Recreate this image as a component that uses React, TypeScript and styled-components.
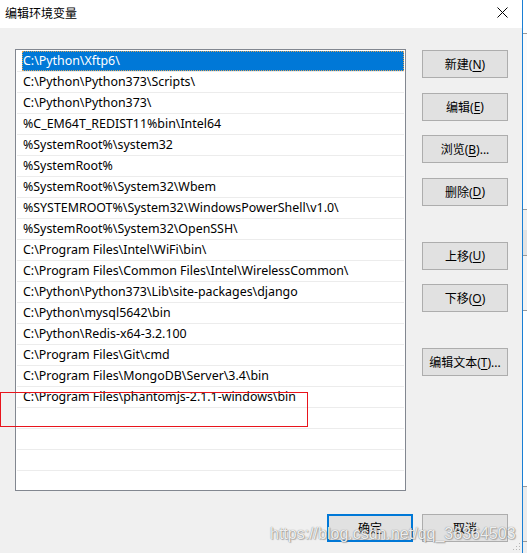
import React from 'react';
import styled, { createGlobalStyle } from 'styled-components';

const GlobalStyle = createGlobalStyle`
  html, body {
    margin: 0;
    padding: 0;
    background: #ffffff;
  }
  body {
    font-family: "Noto Sans", "Noto Sans CJK SC", sans-serif;
    font-size: 12px;
    color: #000;
  }
`;

const uiFont = `"Noto Sans", "Noto Sans CJK SC", sans-serif`;

const Screen = styled.div`
  position: relative;
  display: flex;
  width: 527px;
  height: 553px;
  overflow: hidden;
`;

const Dialog = styled.div`
  width: 522px;
  height: 553px;
  display: flex;
  flex-direction: column;
  background: #f0f0f0;
  border-right: 1px solid #1a7fd4;
`;

const TitleBar = styled.div`
  height: 28px;
  flex: none;
  display: flex;
  align-items: center;
  justify-content: space-between;
  background: #ffffff;
  padding: 0 14px 3px 5px;
  box-sizing: border-box;
`;

const Title = styled.span`
  font-family: ${uiFont};
  font-size: 12px;
  color: #000;
`;

const Body = styled.div`
  flex: 1;
  display: flex;
  flex-direction: column;
  padding: 21px 14px 11px 15px;
`;

const Main = styled.div`
  display: flex;
  gap: 16px;
`;

const PathList = styled.div`
  width: 392px;
  height: 442px;
  box-sizing: border-box;
  border: 1px solid #828790;
  background: #ffffff;
  padding: 1px 1px 0;
  overflow: hidden;
`;

const Row = styled.div`
  height: 21px;
  box-sizing: border-box;
  border-bottom: 1px solid #ececec;
  display: flex;
`;

const Cell = styled.div<{ $selected?: boolean }>`
  flex: 1;
  margin-left: 5px;
  padding-left: 1px;
  line-height: 20px;
  font-family: ${uiFont};
  font-size: 12.4px;
  white-space: nowrap;
  color: ${p => (p.$selected ? '#ffffff' : '#000000')};
  background: ${p => (p.$selected ? '#0078d7' : 'transparent')};
  outline: ${p => (p.$selected ? '1px dotted #d9a35a' : 'none')};
  outline-offset: -1px;
`;

const Side = styled.div`
  display: flex;
  flex-direction: column;
  padding-top: 1px;
`;

const ButtonGroup = styled.div<{ $spaced?: boolean }>`
  display: flex;
  flex-direction: column;
  gap: 14.6px;
  margin-top: ${p => (p.$spaced ? '36px' : '0')};
`;

const Button = styled.button<{ $primary?: boolean }>`
  width: 86px;
  height: 28px;
  box-sizing: border-box;
  padding: 0;
  background: #e1e1e1;
  border: ${p => (p.$primary ? '2px solid #0078d7' : '1px solid #adadad')};
  font-family: ${uiFont};
  font-size: 12px;
  color: #000;
  display: flex;
  align-items: center;
  justify-content: center;

  u {
    text-decoration-thickness: 1px;
    text-underline-offset: 2px;
  }
`;

const Footer = styled.div`
  margin-top: auto;
  display: flex;
  justify-content: flex-end;
  gap: 9px;
`;

const BackWindow = styled.div`
  flex: 1;
  display: flex;
  flex-direction: column;
  background: #ffffff;
`;

const BackBand = styled.div<{ $h: number; $bg: string; $line?: boolean }>`
  height: ${p => p.$h}px;
  flex: none;
  background: ${p => p.$bg};
  border-top: ${p => (p.$line ? '1px solid #9a9a9a' : 'none')};
`;

const Annotation = styled.div`
  position: absolute;
  left: 0;
  top: 392px;
  width: 308px;
  height: 35px;
  box-sizing: border-box;
  border: 1px solid #e8141c;
  pointer-events: none;
`;

const Watermark = styled.div`
  position: absolute;
  left: 270px;
  top: 525px;
  font-family: "Liberation Sans", Arial, sans-serif;
  font-size: 16px;
  line-height: 18px;
  color: rgba(255, 255, 255, 0.9);
  text-shadow: 0 0 1px rgba(70, 70, 70, 0.8), 1px 1px 1px rgba(110, 110, 110, 0.45);
  white-space: nowrap;
  pointer-events: none;
`;

const Grip = styled.svg`
  position: absolute;
  right: 6px;
  bottom: 2px;
`;

const paths = [
  'C:\\Python\\Xftp6\\',
  'C:\\Python\\Python373\\Scripts\\',
  'C:\\Python\\Python373\\',
  '%C_EM64T_REDIST11%bin\\Intel64',
  '%SystemRoot%\\system32',
  '%SystemRoot%',
  '%SystemRoot%\\System32\\Wbem',
  '%SYSTEMROOT%\\System32\\WindowsPowerShell\\v1.0\\',
  '%SystemRoot%\\System32\\OpenSSH\\',
  'C:\\Program Files\\Intel\\WiFi\\bin\\',
  'C:\\Program Files\\Common Files\\Intel\\WirelessCommon\\',
  'C:\\Python\\Python373\\Lib\\site-packages\\django',
  'C:\\Python\\mysql5642\\bin',
  'C:\\Python\\Redis-x64-3.2.100',
  'C:\\Program Files\\Git\\cmd',
  'C:\\Program Files\\MongoDB\\Server\\3.4\\bin',
  'C:\\Program Files\\phantomjs-2.1.1-windows\\bin',
];

// pad the list with blank rows down to the bottom of the box
const rows = [...paths, ...Array(5).fill('')];

const CloseIcon = () => (
  <svg width="11" height="11" viewBox="0 0 11 11">
    <path d="M0.5 0.5 L10.5 10.5 M10.5 0.5 L0.5 10.5" stroke="#000" strokeWidth="1" />
  </svg>
);

const App: React.FC = () => {
  return (
    <Screen>
      <GlobalStyle />
      <Dialog>
        <TitleBar>
          <Title>编辑环境变量</Title>
          <CloseIcon />
        </TitleBar>
        <Body>
          <Main>
            <PathList>
              {rows.map((p, i) => (
                <Row key={i}>
                  <Cell $selected={i === 0}>{p}</Cell>
                </Row>
              ))}
            </PathList>
            <Side>
              <ButtonGroup>
                <Button>新建(<u>N</u>)</Button>
                <Button>编辑(<u>E</u>)</Button>
                <Button>浏览(<u>B</u>)...</Button>
                <Button>删除(<u>D</u>)</Button>
              </ButtonGroup>
              <ButtonGroup $spaced>
                <Button>上移(<u>U</u>)</Button>
                <Button>下移(<u>O</u>)</Button>
              </ButtonGroup>
              <ButtonGroup $spaced>
                <Button>编辑文本(<u>T</u>)...</Button>
              </ButtonGroup>
            </Side>
          </Main>
          <Footer>
            <Button $primary>确定</Button>
            <Button>取消</Button>
          </Footer>
        </Body>
      </Dialog>
      <BackWindow>
        <BackBand $h={33} $bg="#ffffff" />
        <BackBand $h={175} $bg="#fbfbfb" $line />
        <BackBand $h={20} $bg="#f0f0f0" $line />
        <BackBand $h={25} $bg="#e3e3e3" />
        <BackBand $h={54} $bg="#f4f4f4" $line />
        <BackBand $h={175} $bg="#ffffff" $line />
        <BackBand $h={54} $bg="#ececec" $line />
        <BackBand $h={17} $bg="#f0f0f0" $line />
      </BackWindow>
      <Annotation />
      <Watermark>https://blog.csdn.net/qq_36364503</Watermark>
      <Grip width="8" height="8" viewBox="0 0 8 8">
        <rect x="6" y="0" width="1" height="1" fill="#b5b5b5" />
        <rect x="3" y="3" width="1" height="1" fill="#b5b5b5" />
        <rect x="6" y="3" width="1" height="1" fill="#b5b5b5" />
        <rect x="0" y="6" width="1" height="1" fill="#b5b5b5" />
        <rect x="3" y="6" width="1" height="1" fill="#b5b5b5" />
        <rect x="6" y="6" width="1" height="1" fill="#b5b5b5" />
      </Grip>
    </Screen>
  );
};

export default App;
